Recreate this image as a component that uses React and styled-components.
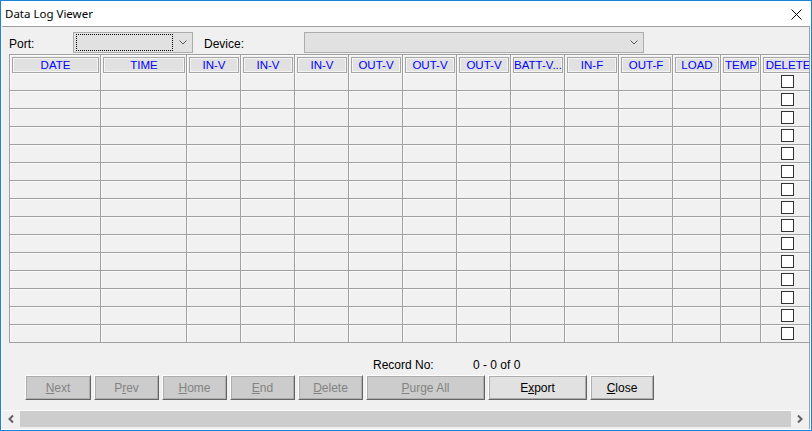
import React from 'react'
import styled, { createGlobalStyle } from 'styled-components'

const GlobalStyle = createGlobalStyle`
  html, body {
    margin: 0;
    padding: 0;
    background: #ffffff;
  }
  body {
    font-family: "Liberation Sans", Arial, sans-serif;
    font-size: 12px;
    color: #000;
  }
`

const Window = styled.div`
  width: 812px;
  height: 431px;
  box-sizing: border-box;
  border: 1px solid #1883d7;
  background: #ffffff;
  padding: 0 1px 1px 1px;
  display: flex;
  flex-direction: column;
  overflow: hidden;
`

const TitleBar = styled.div`
  height: 25px;
  flex-shrink: 0;
  display: flex;
  align-items: center;
  justify-content: space-between;
  padding: 0 8px 0 3px;
  font-family: "Noto Sans", "Liberation Sans", sans-serif;
  font-size: 11.5px;
  color: #000;
`

const CloseGlyph = styled.svg`
  width: 11px;
  height: 11px;
  margin-top: 1px;
`

const Client = styled.div`
  flex: 1;
  min-height: 0;
  background: #f0f0f0;
  border-top: 1px solid #a0a0a0;
  border-right: 1px solid #a0a0a0;
  padding: 5px 0 1px 7px;
  display: flex;
  flex-direction: column;
  overflow: hidden;
`

const Toolbar = styled.div`
  height: 22px;
  display: flex;
  align-items: flex-start;
  flex-shrink: 0;
`

const Label = styled.span`
  width: ${p => p.$width}px;
  margin-left: ${p => p.$offset || 0}px;
  padding-top: 5px;
  line-height: 14px;
  flex-shrink: 0;
`

const Combo = styled.div`
  width: ${p => p.$width}px;
  height: 21px;
  box-sizing: border-box;
  border: 1px solid #adadad;
  background: #e1e1e1;
  display: flex;
  align-items: center;
  padding: 0 4px 0 2px;
  flex-shrink: 0;
`

const FocusRect = styled.div`
  flex: 1;
  height: 15px;
  border: 1px dotted ${p => (p.$focused ? '#000' : 'transparent')};
  margin-right: 6px;
`

const Chevron = styled.svg`
  width: 8px;
  height: 5px;
  margin-right: 1px;
`

const Grid = styled.div`
  display: grid;
  grid-template-columns: ${p => p.$cols};
  grid-auto-rows: 18px;
  width: max-content;
  flex-shrink: 0;
  border-left: 1px solid #a0a0a0;
  border-top: 1px solid #a0a0a0;
`

const Cell = styled.div`
  box-sizing: border-box;
  border-right: 1px solid #a0a0a0;
  border-bottom: 1px solid #a0a0a0;
  box-shadow: inset 1px 1px 0 #fafafa;
  background: #f1f1f2;
  display: flex;
  align-items: center;
  justify-content: center;
`

const HeaderCell = styled(Cell)`
  height: 19px;
  align-items: flex-start;
  padding: 2px 1px 0 2px;
`

const HeaderBox = styled.div`
  flex: 1;
  height: 16px;
  box-sizing: border-box;
  border: 1px solid #a6a6a6;
  box-shadow: inset 0 0 0 1px #f4f4f4;
  background: #e1e1e1;
  color: #0000ff;
  font-size: 11.5px;
  line-height: 14px;
  text-align: center;
  white-space: nowrap;
  overflow: hidden;
`

const CheckBox = styled.div`
  width: 13px;
  height: 13px;
  box-sizing: border-box;
  border: 1px solid #333333;
  background: #ffffff;
`

const RecordRow = styled.div`
  display: flex;
  margin: 15px 0 0 364px;
  line-height: 14px;
`

const RecordLabel = styled.span`
  width: 100px;
`

const ButtonRow = styled.div`
  display: flex;
  gap: 3px;
  margin: 3px 0 0 16px;
`

const Button = styled.button`
  width: ${p => p.$width}px;
  height: 25px;
  box-sizing: border-box;
  padding: 0;
  border: 1px solid;
  border-color: #ffffff #646464 #646464 #ffffff;
  box-shadow: inset 0 0 0 1px #adadad;
  background: ${p => (p.disabled ? '#cccccc' : '#e1e1e1')};
  color: ${p => (p.disabled ? '#838383' : '#000000')};
  font-family: "Liberation Sans", Arial, sans-serif;
  font-size: 12px;
  line-height: 14px;

  u {
    text-decoration-thickness: 1px;
  }
`

const ScrollBar = styled.div`
  margin: auto 0 1px -7px;
  height: 16px;
  display: flex;
  border-top: 1px solid #fbfbfb;
  flex-shrink: 0;
`

const ScrollArrow = styled.div`
  width: 18px;
  display: flex;
  align-items: center;
  justify-content: center;
  background: #f0f0f0;
`

const ScrollThumb = styled.div`
  flex: 1;
  background: #cdcdcd;
`

const columns = [
  { label: 'DATE', width: 91 },
  { label: 'TIME', width: 86 },
  { label: 'IN-V', width: 54 },
  { label: 'IN-V', width: 54 },
  { label: 'IN-V', width: 54 },
  { label: 'OUT-V', width: 54 },
  { label: 'OUT-V', width: 54 },
  { label: 'OUT-V', width: 54 },
  { label: 'BATT-V...', width: 54 },
  { label: 'IN-F', width: 54 },
  { label: 'OUT-F', width: 54 },
  { label: 'LOAD', width: 48 },
  { label: 'TEMP', width: 40 },
  { label: 'DELETE', width: 54, check: true }
]

const ROWS = 15

const buttons = [
  { pre: '', key: 'N', post: 'ext', width: 66, disabled: true },
  { pre: 'P', key: 'r', post: 'ev', width: 65, disabled: true },
  { pre: '', key: 'H', post: 'ome', width: 65, disabled: true },
  { pre: '', key: 'E', post: 'nd', width: 65, disabled: true },
  { pre: '', key: 'D', post: 'elete', width: 65, disabled: true },
  { pre: '', key: 'P', post: 'urge All', width: 119, disabled: true },
  { pre: 'E', key: 'x', post: 'port', width: 99 },
  { pre: '', key: 'C', post: 'lose', width: 64 }
]

const DownChevron = () => (
  <Chevron viewBox="0 0 8 5">
    <polyline points="0.5,0.5 4,4 7.5,0.5" fill="none" stroke="#5a5a5a" strokeWidth="1" />
  </Chevron>
)

const ArrowGlyph = ({ dir }) => (
  <svg width="6" height="8" viewBox="0 0 6 8">
    <polyline
      points={dir === 'left' ? '5,0.5 1.5,4 5,7.5' : '1,0.5 4.5,4 1,7.5'}
      fill="none"
      stroke="#606060"
      strokeWidth="2"
    />
  </svg>
)

export default function App() {
  const cols = columns.map(c => `${c.width}px`).join(' ')

  return (
    <>
      <GlobalStyle />
      <Window>
        <TitleBar>
          <span>Data Log Viewer</span>
          <CloseGlyph viewBox="0 0 11 11">
            <path d="M0.5 0.5 L10.5 10.5 M10.5 0.5 L0.5 10.5" stroke="#000" strokeWidth="1" />
          </CloseGlyph>
        </TitleBar>

        <Client>
          <Toolbar>
            <Label $width={64}>Port:</Label>
            <Combo $width={120}>
              <FocusRect $focused />
              <DownChevron />
            </Combo>
            <Label $width={100} $offset={11}>Device:</Label>
            <Combo $width={340}>
              <FocusRect />
              <DownChevron />
            </Combo>
          </Toolbar>

          <Grid $cols={cols}>
            {columns.map((c, i) => (
              <HeaderCell key={'h' + i}>
                <HeaderBox>{c.label}</HeaderBox>
              </HeaderCell>
            ))}
            {Array.from({ length: ROWS }).map((_, r) =>
              columns.map((c, i) => (
                <Cell key={r + '-' + i}>{c.check && <CheckBox />}</Cell>
              ))
            )}
          </Grid>

          <RecordRow>
            <RecordLabel>Record No:</RecordLabel>
            <span>0 - 0 of 0</span>
          </RecordRow>

          <ButtonRow>
            {buttons.map(b => (
              <Button key={b.key + b.post} $width={b.width} disabled={b.disabled}>
                {b.pre}
                <u>{b.key}</u>
                {b.post}
              </Button>
            ))}
          </ButtonRow>

          <ScrollBar>
            <ScrollArrow>
              <ArrowGlyph dir="left" />
            </ScrollArrow>
            <ScrollThumb />
            <ScrollArrow>
              <ArrowGlyph dir="right" />
            </ScrollArrow>
          </ScrollBar>
        </Client>
      </Window>
    </>
  )
}
